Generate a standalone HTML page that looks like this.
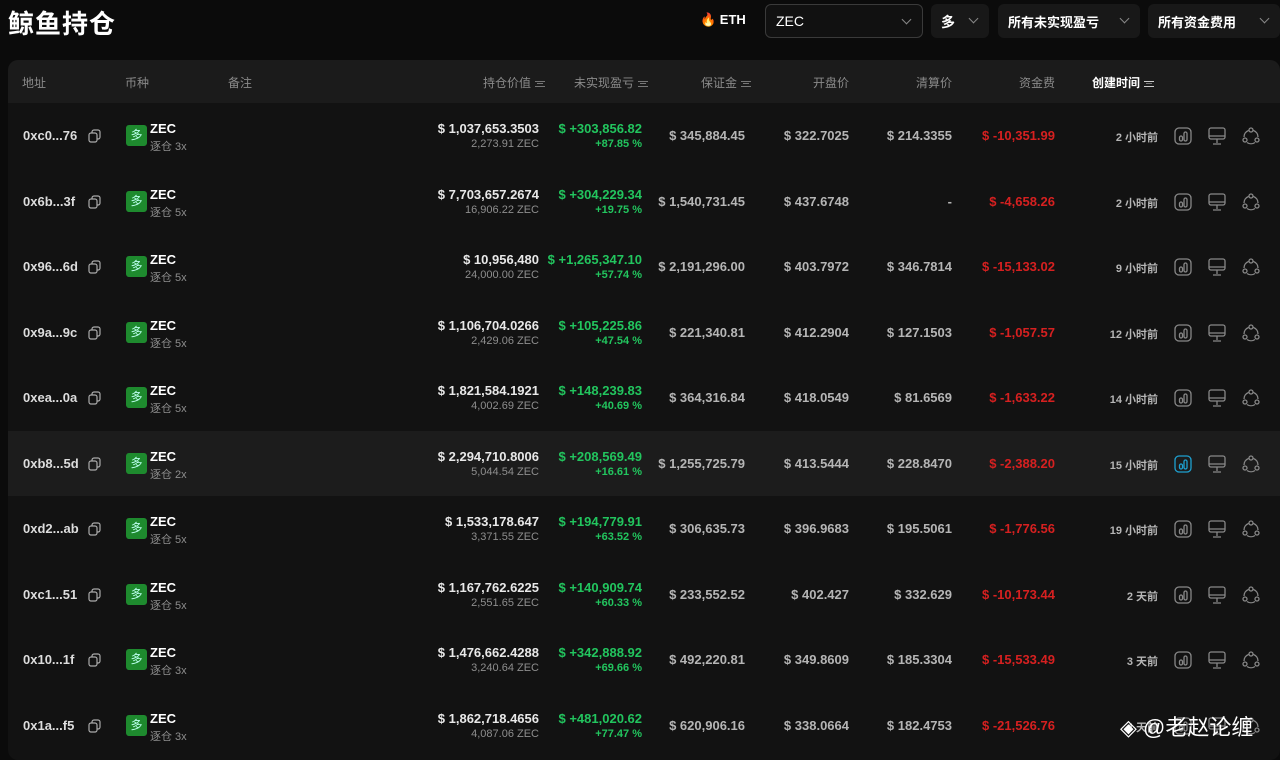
<!DOCTYPE html>
<html><head><meta charset="utf-8"><style>
*{margin:0;padding:0;box-sizing:border-box}
body{width:1280px;height:749px;overflow:hidden;background:#0b0b0b;font-family:"Liberation Sans","Noto Sans CJK SC",sans-serif;color:#ddd;position:relative}
.title{position:absolute;left:8px;top:4px;font-size:26px;font-weight:700;color:#fff;letter-spacing:1px}
.eth{position:absolute;left:700px;top:12px;font-size:13px;font-weight:700;color:#fff}
.sel{position:absolute;top:4px;height:34px;border-radius:6px;background:#181818;color:#fff;font-size:14px;font-weight:700;padding:8px 10px;}
.sel .ch{position:absolute;right:12px;top:11px;width:7px;height:7px;border-right:1.2px solid #888;border-bottom:1.2px solid #888;transform:rotate(45deg)}
.wrap{position:absolute;left:8px;top:60px;width:1272px;height:700px;background:#121212;border-radius:10px;overflow:hidden}
.hdr{height:43px;background:#1b1b1b;position:relative;font-size:12px;color:#8a8a8a}
.hdr span{position:absolute;top:14px}
.row{position:absolute;left:0;width:1272px;height:65.5px}
.c{position:absolute;white-space:nowrap;font-size:13px;font-weight:700;color:#b5b5b5}
.r{text-align:right}
.sub{font-size:11px;color:#8e8e8e;font-weight:400}
.g{color:#22c55e}.red{color:#d62020}
.ic{position:absolute;left:118px;top:22px;width:21px;height:21px;background:#1e8a2e;border-radius:3px;color:#bfe;font-size:12px;text-align:center;line-height:21px}
.f{display:inline-block;width:10px;height:6px;border-top:1.5px solid #777;border-bottom:1.5px solid #777;margin-left:4px;vertical-align:middle;position:relative}
.f:after{content:"";position:absolute;left:2px;right:2px;top:1px;border-top:1.5px solid #777}
svg{position:absolute}
</style></head><body>
<div class="title">鲸鱼持仓</div>
<div class="eth">🔥 ETH</div>
<div class="sel" style="left:765px;width:158px;border:1px solid #3a3a3a;background:#111;font-weight:400">ZEC<i class="ch"></i></div>
<div class="sel" style="left:931px;width:58px">多<i class="ch"></i></div>
<div class="sel" style="left:998px;width:142px;font-size:13px">所有未实现盈亏<i class="ch"></i></div>
<div class="sel" style="left:1148px;width:132px;font-size:13px">所有资金费用<i class="ch"></i></div>
<div class="wrap">
<div class="hdr">
<span style="left:14px">地址</span><span style="left:117px">币种</span><span style="left:220px">备注</span>
<span style="right:735px">持仓价值<i class="f"></i></span>
<span style="right:632px">未实现盈亏<i class="f"></i></span>
<span style="right:529px">保证金<i class="f"></i></span>
<span style="right:431px">开盘价</span>
<span style="right:328px">清算价</span>
<span style="right:225px">资金费</span>
<span style="left:1084px;color:#fff;font-weight:700">创建时间<i class="f" style="border-color:#ccc"></i></span>
</div>
<div id="rows"></div>
</div>
<div style="position:absolute;left:1120px;top:710px;font-size:22px;color:#fff">◈ @老赵论缠</div>
<script>
const d=[
["0xc0...76","3x","$ 1,037,653.3503","2,273.91 ZEC","$ +303,856.82","+87.85 %","$ 345,884.45","$ 322.7025","$ 214.3355","$ -10,351.99","2 小时前"],
["0x6b...3f","5x","$ 7,703,657.2674","16,906.22 ZEC","$ +304,229.34","+19.75 %","$ 1,540,731.45","$ 437.6748","-","$ -4,658.26","2 小时前"],
["0x96...6d","5x","$ 10,956,480","24,000.00 ZEC","$ +1,265,347.10","+57.74 %","$ 2,191,296.00","$ 403.7972","$ 346.7814","$ -15,133.02","9 小时前"],
["0x9a...9c","5x","$ 1,106,704.0266","2,429.06 ZEC","$ +105,225.86","+47.54 %","$ 221,340.81","$ 412.2904","$ 127.1503","$ -1,057.57","12 小时前"],
["0xea...0a","5x","$ 1,821,584.1921","4,002.69 ZEC","$ +148,239.83","+40.69 %","$ 364,316.84","$ 418.0549","$ 81.6569","$ -1,633.22","14 小时前"],
["0xb8...5d","2x","$ 2,294,710.8006","5,044.54 ZEC","$ +208,569.49","+16.61 %","$ 1,255,725.79","$ 413.5444","$ 228.8470","$ -2,388.20","15 小时前"],
["0xd2...ab","5x","$ 1,533,178.647","3,371.55 ZEC","$ +194,779.91","+63.52 %","$ 306,635.73","$ 396.9683","$ 195.5061","$ -1,776.56","19 小时前"],
["0xc1...51","5x","$ 1,167,762.6225","2,551.65 ZEC","$ +140,909.74","+60.33 %","$ 233,552.52","$ 402.427","$ 332.629","$ -10,173.44","2 天前"],
["0x10...1f","3x","$ 1,476,662.4288","3,240.64 ZEC","$ +342,888.92","+69.66 %","$ 492,220.81","$ 349.8609","$ 185.3304","$ -15,533.49","3 天前"],
["0x1a...f5","3x","$ 1,862,718.4656","4,087.06 ZEC","$ +481,020.62","+77.47 %","$ 620,906.16","$ 338.0664","$ 182.4753","$ -21,526.76","4 天前"]];
let h="";
d.forEach((r,i)=>{const top=43+i*65.5;const hl=i==5;const ic=hl?"#1ea0d0":"#888";
h+=`<div class="row" style="top:${top}px;${hl?'background:#1c1c1c':''}">
<div class="c" style="left:15px;top:25px;color:#ddd">${r[0]}</div>
<svg style="left:80px;top:26px" width="14" height="14" viewBox="0 0 14 14" fill="none" stroke="#aaa" stroke-width="1.2"><rect x="1" y="4" width="8" height="9" rx="2"/><path d="M4 4V3a2 2 0 0 1 2-2h4a2 2 0 0 1 2 2v5a2 2 0 0 1-2 2H9"/></svg>
<div class="ic">多</div>
<div class="c" style="left:142px;top:18px;color:#fff">ZEC</div>
<div class="c sub" style="left:142px;top:35px">逐仓 ${r[1]}</div>
<div class="c r" style="right:741px;top:18px;color:#e8e8e8">${r[2]}</div>
<div class="c r sub" style="right:741px;top:35px">${r[3]}</div>
<div class="c r g" style="right:638px;top:18px">${r[4]}</div>
<div class="c r g" style="right:638px;top:35px;font-size:11px">${r[5]}</div>
<div class="c r" style="right:535px;top:25px">${r[6]}</div>
<div class="c r" style="right:431px;top:25px">${r[7]}</div>
<div class="c r" style="right:328px;top:25px">${r[8]}</div>
<div class="c r red" style="right:225px;top:25px">${r[9]}</div>
<div class="c r" style="right:122px;top:26px;font-size:11px">${r[10]}</div>
<svg style="left:1165px;top:23px" width="20" height="20" viewBox="0 0 20 20" fill="none" stroke="${ic}" stroke-width="1.3"><rect x="2" y="2" width="16" height="16" rx="4"/><rect x="6.5" y="10" width="3" height="5" rx="1.5"/><rect x="11" y="6" width="3" height="9" rx="1.5"/></svg>
<svg style="left:1199px;top:23px" width="20" height="20" viewBox="0 0 20 20" fill="none" stroke="#888" stroke-width="1.3"><rect x="2" y="2" width="16" height="11" rx="2"/><path d="M2 10h16M10 13v4M6 18h8"/></svg>
<svg style="left:1233px;top:23px" width="20" height="20" viewBox="0 0 20 20" fill="none" stroke="#888" stroke-width="1.3"><circle cx="10" cy="4" r="2"/><circle cx="4" cy="14" r="2"/><circle cx="16" cy="14" r="2"/><path d="M7.5 4.5A7 7 0 0 0 3 11M12.5 4.5A7 7 0 0 1 17 11M6 16.5a7 7 0 0 0 8 0"/></svg>
</div>`});
document.getElementById("rows").innerHTML=h;
</script>
</body></html>
